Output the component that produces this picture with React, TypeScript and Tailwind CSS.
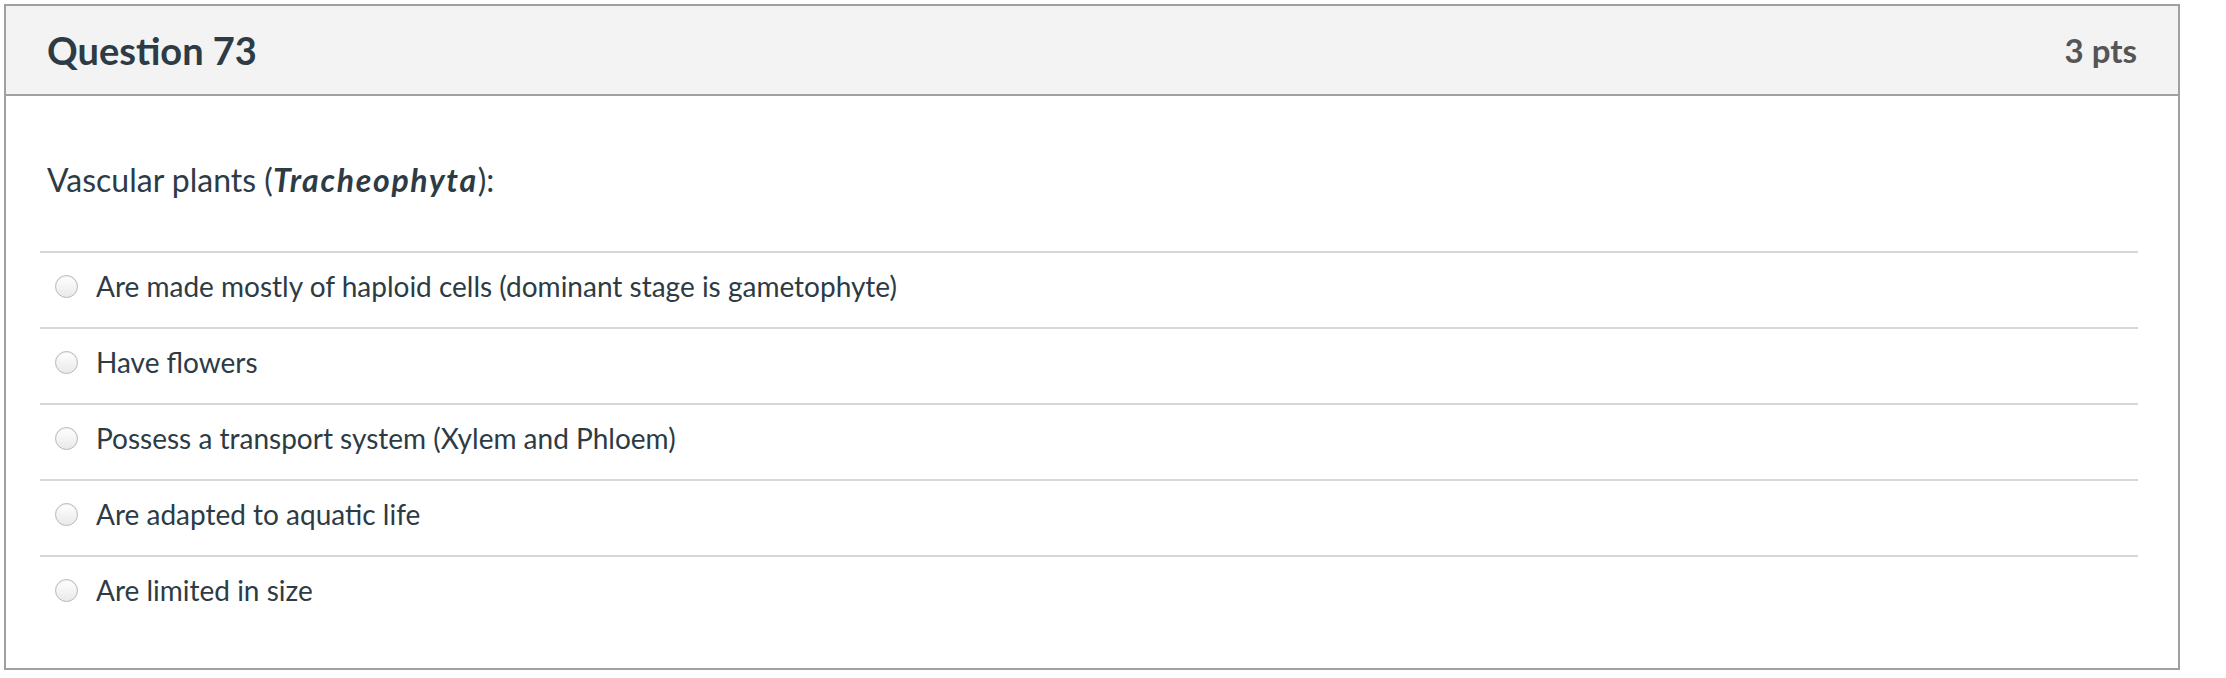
const options = [
  'Are made mostly of haploid cells (dominant stage is gametophyte)',
  'Have flowers',
  'Possess a transport system (Xylem and Phloem)',
  'Are adapted to aquatic life',
  'Are limited in size',
]

function Radio() {
  return (
    <span className="block w-[23px] h-[23px] shrink-0 rounded-full border border-[#b8b8b8] bg-gradient-to-b from-white to-[#e9e9e9] shadow-[inset_0_1px_1px_rgba(0,0,0,0.06)]" />
  )
}

export default function App() {
  return (
    <div className="w-[2226px] h-[678px] bg-white p-[4px] font-['Lato','Liberation_Sans',sans-serif] text-[#2d3b45]">
      <div className="w-[2176px] h-[666px] border-2 border-[#a0a0a0] flex flex-col">
        {/* header */}
        <div className="h-[90px] shrink-0 bg-[#f3f3f3] border-b-2 border-[#a0a0a0] px-[41px] flex items-center justify-between">
          <h2 className="text-[38px] font-bold leading-none">Question 73</h2>
          <span className="text-[33px] font-bold text-[#555555] leading-none">3 pts</span>
        </div>

        {/* body */}
        <div className="pl-[34px] pr-[40px]">
          <p className="mt-[64px] pl-[7px] text-[32px] leading-[40px]">
            Vascular plants (<strong className="italic font-bold tracking-[1.7px]">Tracheophyta</strong>):
          </p>

          <div className="mt-[51px]">
            {options.map((opt) => (
              <label
                key={opt}
                className="h-[76px] border-t-2 border-[#d7d7d7] flex items-center pb-[8px] pl-[15px] gap-[18px] text-[28px]"
              >
                <Radio />
                <span>{opt}</span>
              </label>
            ))}
          </div>
        </div>
      </div>
    </div>
  )
}
